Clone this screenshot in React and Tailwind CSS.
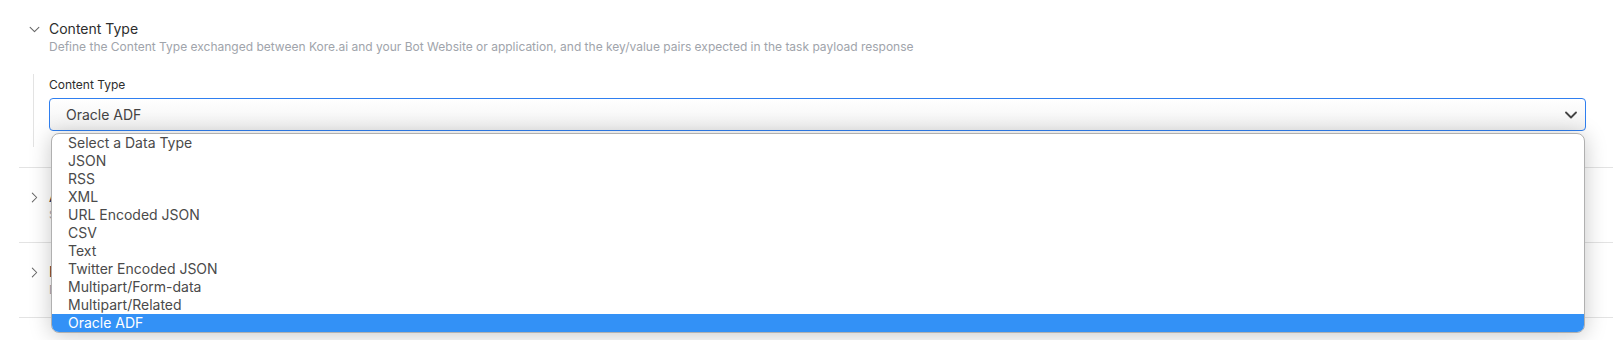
import React from "react";

const items = [
  "Select a Data Type",
  "JSON",
  "RSS",
  "XML",
  "URL Encoded JSON",
  "CSV",
  "Text",
  "Twitter Encoded JSON",
  "Multipart/Form-data",
  "Multipart/Related",
  "Oracle ADF",
];

function ChevronDown({ className, width = 1.2 }) {
  return (
    <svg className={className} viewBox="0 0 12 8" fill="none" stroke="currentColor" strokeWidth={width} strokeLinecap="round" strokeLinejoin="round">
      <path d="M1 1.5l5 5 5-5" />
    </svg>
  );
}

function ChevronRight({ className }) {
  return (
    <svg className={className} viewBox="0 0 8 12" fill="none" stroke="currentColor" strokeWidth="1.2" strokeLinecap="round" strokeLinejoin="round">
      <path d="M1.5 1l5 5-5 5" />
    </svg>
  );
}

function SectionHeader({ open, title, subtitle }) {
  return (
    <div className="flex">
      <div className="w-[30px] pl-[10px] flex items-center h-[18px]">
        {open ? (
          <ChevronDown className="w-[11px] h-[7px] text-[#666]" />
        ) : (
          <ChevronRight className="ml-[2px] w-[7px] h-[11px] text-[#666]" />
        )}
      </div>
      <div className="flex flex-col">
        <div className="text-[14px] leading-[18px] text-[#2d2d2d]">{title}</div>
        <div className="text-[12px] leading-[18px] text-[#a0a4ab]">{subtitle}</div>
      </div>
    </div>
  );
}

export default function App() {
  return (
    <div className="relative w-[1613px] h-[340px] overflow-hidden bg-white" style={{ fontFamily: "Inter, 'Noto Sans', sans-serif" }}>
      <div className="pl-[19px]">
        <div className="pt-5 pb-5">
          <SectionHeader
            open
            title="Content Type"
            subtitle="Define the Content Type exchanged between Kore.ai and your Bot Website or application, and the key/value pairs expected in the task payload response"
          />
          <div className="mt-[18px] ml-[14px] border-l border-[#e3e3e3] pl-[15px] pt-[3px] pb-4">
            <div className="text-[12px] leading-4 text-[#2d2d2d]">Content Type</div>
            <div className="relative mt-[5px] w-[1537px]">
              <div className="h-[33px] rounded-[4px] border border-[#2f7ff0] bg-gradient-to-b from-white to-[#f2f2f2] flex items-center pl-4 pr-[8px]">
                <span className="flex-1 text-[14px] text-[#444]">Oracle ADF</span>
                <ChevronDown className="w-[12px] h-[8px] text-[#444]" width={1.8} />
              </div>
              <div className="absolute left-[2px] top-[35px] w-[1534px] rounded-[8px] border border-[#b0b0b0] bg-white overflow-hidden shadow-[0_2px_22px_rgba(0,0,0,0.22)] z-10">
                {items.map((it) => (
                  <div
                    key={it}
                    className={
                      it === "Oracle ADF"
                        ? "h-[18px] leading-[18px] pl-4 text-[14px] bg-[#3391f6] text-white"
                        : "h-[18px] leading-[18px] pl-4 text-[14px] text-[#4a4a4a]"
                    }
                  >
                    {it}
                  </div>
                ))}
              </div>
            </div>
          </div>
        </div>
        <div className="border-t border-[#e3e3e3] pt-5 pb-[18px]">
          <SectionHeader open={false} title="Authorization" subtitle="Set up authorization to access the Bot Website or application" />
        </div>
        <div className="border-t border-[#e3e3e3] pt-5 pb-[18px]">
          <SectionHeader open={false} title="Request Definition" subtitle="Define the request sent to the Bot Website or application" />
        </div>
        <div className="border-t border-[#e3e3e3] pt-5 pb-[18px]">
          <SectionHeader open={false} title="Validation" subtitle="Validate the response received" />
        </div>
      </div>
    </div>
  );
}
